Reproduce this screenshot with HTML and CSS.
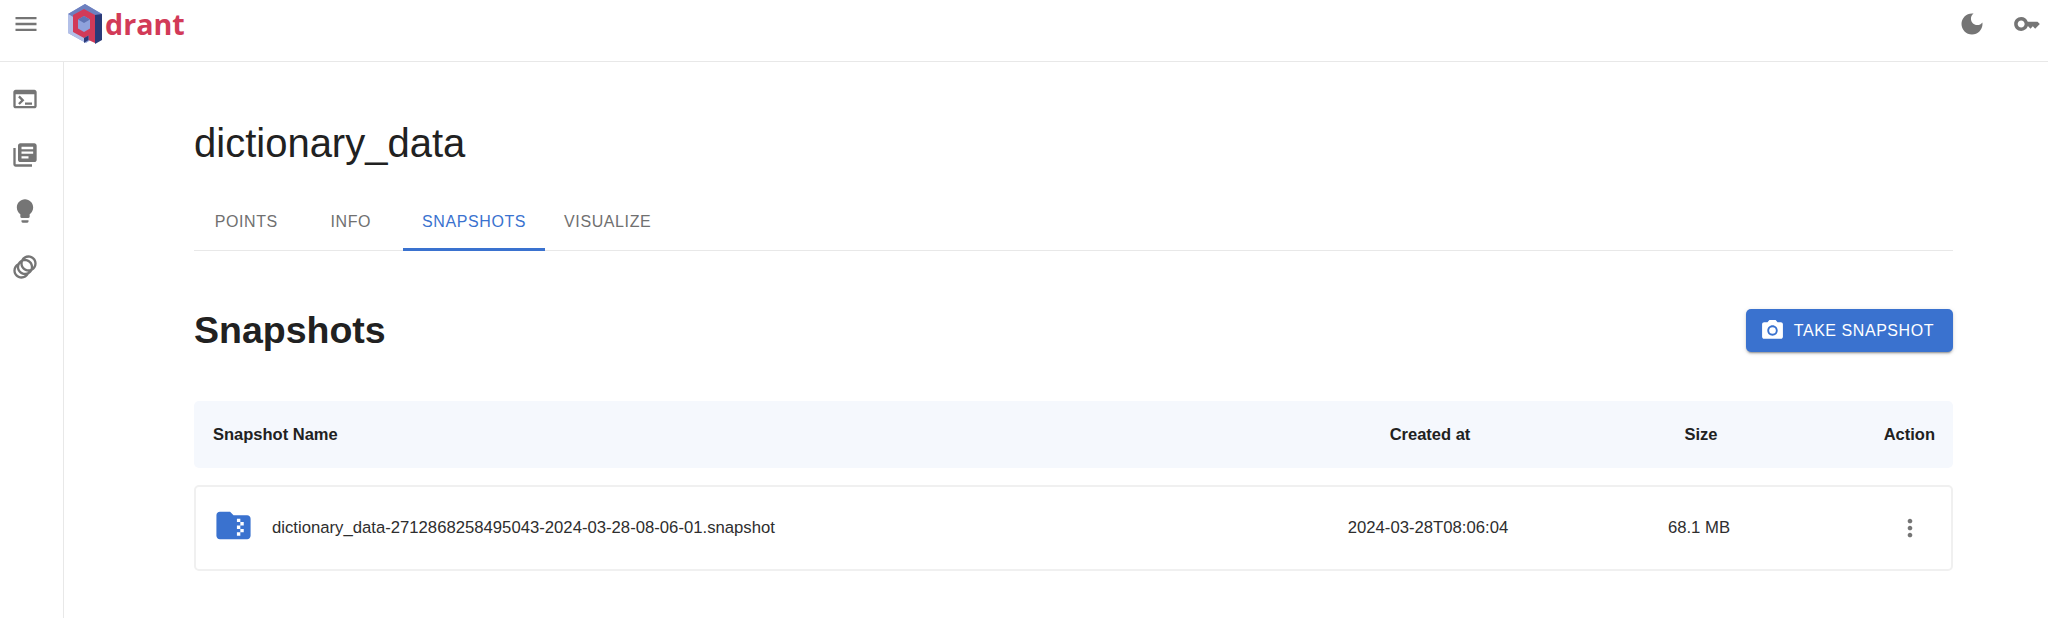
FILE: index.html
```html
<!DOCTYPE html>
<html lang="en">
<head>
    <meta charset="UTF-8">
    <meta name="viewport" content="width=device-width, initial-scale=1.0">
    <title>Qdrant - dictionary_data</title>
    <link rel="stylesheet" href="styles.css">
</head>
<body>
    <header class="topbar">
        <svg class="icon menu-icon" viewBox="0 0 24 24"><path d="M3 18h18v-2H3v2zm0-5h18v-2H3v2zm0-7v2h18V6H3z"/></svg>
        <div class="logo">
            <svg class="logo-mark" viewBox="0 0 36 40">
                <polygon fill="#8fa2dc" points="17,0 34,10 34,28 18,39 0,29 0,10"/>
                <polygon fill="#6d80bf" points="17,0 34,10 27,14 17,8 7,14 0,10"/>
                <polygon fill="#b3c0e8" points="0,10 5,13 5,27 18,34 18,39 0,29"/>
                <polygon fill="#2a3a78" points="27,11 34,10 34,36 27,40"/>
                <polygon fill="#d23a58" points="16,5 27,11 27,39 20.500,36 20.500,31.500 16,34 5,28 5,11"/>
                <polygon fill="#8fa2dc" points="16,12 22,15.500 22,24.500 16,28 10,24.500 10,15.500"/>
                <polygon fill="#5f73b4" points="16,12 22,15.500 16,19 10,15.500"/>
                <polygon fill="#2a3a78" points="16,34 20.500,31.500 20.500,36 16,39"/>
            </svg>
            <span class="logo-text">drant</span>
        </div>
        <div class="topbar-actions">
            <svg class="icon" viewBox="0 0 24 24"><path d="M12 3c-4.970 0-9 4.030-9 9s4.030 9 9 9 9-4.030 9-9c0-.46-.04-.92-.1-1.360-.98 1.370-2.580 2.260-4.400 2.260-2.980 0-5.400-2.420-5.400-5.400 0-1.810.89-3.420 2.260-4.400-.44-.06-.9-.1-1.360-.1z"/></svg>
            <svg class="icon" viewBox="0 0 24 24"><path d="M21 10h-8.350C11.830 7.670 9.610 6 7 6c-3.310 0-6 2.690-6 6s2.690 6 6 6c2.610 0 4.830-1.670 5.650-4H13l2 2 2-2 2 2 4-4.040L21 10zM7 15c-1.650 0-3-1.350-3-3s1.350-3 3-3 3 1.350 3 3-1.350 3-3 3z"/></svg>
        </div>
    </header>

    <div class="layout">
        <nav class="sidebar">
            <svg class="icon" viewBox="0 0 24 24"><path d="M20 4H4c-1.100 0-2 .9-2 2v12c0 1.100.9 2 2 2h16c1.100 0 2-.9 2-2V6c0-1.100-.9-2-2-2zm0 14H4V8h16v10zm-2-1h-6v-2h6v2zM7.500 17l-1.410-1.410L8.670 13l-2.590-2.590L7.500 9l4 4-4 4z"/></svg>
            <svg class="icon" viewBox="0 0 24 24"><path d="M4 6H2v14c0 1.100.9 2 2 2h14v-2H4V6zm16-4H8c-1.100 0-2 .9-2 2v12c0 1.100.9 2 2 2h12c1.100 0 2-.9 2-2V4c0-1.100-.9-2-2-2zm-1 9H9V9h10v2zm-4 4H9v-2h6v2zm4-8H9V5h10v2z"/></svg>
            <svg class="icon" viewBox="0 0 24 24"><path d="M9 21c0 .55.45 1 1 1h4c.55 0 1-.45 1-1v-1H9v1zm3-19C8.140 2 5 5.140 5 9c0 2.380 1.190 4.470 3 5.740V17c0 .55.45 1 1 1h6c.55 0 1-.45 1-1v-2.260c1.810-1.270 3-3.360 3-5.740 0-3.860-3.140-7-7-7z"/></svg>
            <svg class="icon" viewBox="0 0 24 24"><path d="M15 2c-2.710 0-5.050 1.540-6.220 3.780-1.280.67-2.340 1.720-3 3C3.540 9.950 2 12.290 2 15c0 3.870 3.130 7 7 7 2.710 0 5.050-1.540 6.220-3.780 1.280-.67 2.340-1.720 3-3C20.460 14.050 22 11.710 22 9c0-3.870-3.130-7-7-7zM9 20c-2.760 0-5-2.240-5-5 0-1.120.37-2.160 1-3 0 3.870 3.130 7 7 7-.84.63-1.880 1-3 1zm3-3c-2.760 0-5-2.240-5-5 0-1.120.37-2.160 1-3 0 3.860 3.130 6.990 7 6.990-.84.64-1.880 1.010-3 1.010zm4.700-3.300c-.53.19-1.100.3-1.700.3-2.760 0-5-2.240-5-5 0-.6.11-1.170.3-1.700.53-.19 1.100-.3 1.700-.3 2.760 0 5 2.240 5 5 0 .6-.11 1.170-.3 1.700zM19 12c0-3.860-3.130-6.990-7-7 .84-.63 1.870-1 3-1 2.760 0 5 2.240 5 5 0 1.120-.37 2.160-1 3z"/></svg>
        </nav>

        <main class="content">
            <h1 class="page-title">dictionary_data</h1>

            <div class="tabs">
                <div class="tab">POINTS</div>
                <div class="tab">INFO</div>
                <div class="tab active">SNAPSHOTS</div>
                <div class="tab">VISUALIZE</div>
            </div>

            <div class="section-head">
                <h2 class="section-title">Snapshots</h2>
                <button class="primary-btn">
                    <svg viewBox="0 0 24 24"><circle cx="12" cy="12" r="3.200"/><path d="M9 2 7.170 4H4c-1.100 0-2 .9-2 2v12c0 1.100.9 2 2 2h16c1.100 0 2-.9 2-2V6c0-1.100-.9-2-2-2h-3.170L15 2H9zm3 15c-2.760 0-5-2.240-5-5s2.240-5 5-5 5 2.240 5 5-2.240 5-5 5z"/></svg>
                    TAKE SNAPSHOT
                </button>
            </div>

            <div class="snap-grid snap-head">
                <div>Snapshot Name</div>
                <div class="center">Created at</div>
                <div class="center">Size</div>
                <div class="right">Action</div>
            </div>

            <div class="snap-grid snap-row">
                <div class="snap-name">
                    <svg viewBox="0 0 24 24"><path d="M20 6h-8l-2-2H4c-1.100 0-1.990.9-1.990 2L2 18c0 1.100.9 2 2 2h16c1.100 0 2-.9 2-2V8c0-1.100-.9-2-2-2zm-2 6h-2v2h2v2h-2v2h-2v-2h2v-2h-2v-2h2v-2h-2V8h2v2h2v2z"/></svg>
                    <span>dictionary_data-2712868258495043-2024-03-28-08-06-01.snapshot</span>
                </div>
                <div class="center">2024-03-28T08:06:04</div>
                <div class="center">68.1 MB</div>
                <div class="right">
                    <svg class="icon more-icon" viewBox="0 0 24 24"><path d="M12 8c1.100 0 2-.9 2-2s-.9-2-2-2-2 .9-2 2 .9 2 2 2zm0 2c-1.100 0-2 .9-2 2s.9 2 2 2 2-.9 2-2-.9-2-2-2zm0 6c-1.100 0-2 .9-2 2s.9 2 2 2 2-.9 2-2-.9-2-2-2z"/></svg>
                </div>
            </div>
        </main>
    </div>
</body>
</html>
```
FILE: styles.css
```css
* {
    box-sizing: border-box;
}

html,
body {
    height: 100%;
}

body {
    margin: 0;
    overflow: hidden;
    background-color: #fff;
    color: #212121;
    font-family: "Liberation Sans", Arial, sans-serif;
}

.icon {
    width: 28px;
    height: 28px;
    fill: #757575;
    flex-shrink: 0;
}

/* Top bar */
.topbar {
    display: flex;
    align-items: center;
    height: 62px;
    padding: 0 7px 14px 12px;
    border-bottom: 1px solid #e8e8e8;
}

.menu-icon {
    margin-right: 28px;
}

.logo {
    display: flex;
    align-items: center;
}

.logo-mark {
    width: 36px;
    height: 40px;
}

.logo-text {
    margin-left: 1px;
    color: #d23a58;
    font-family: "Open Sans", sans-serif;
    font-size: 28.700px;
    font-weight: 700;
    line-height: 40px;
}

.topbar-actions {
    display: flex;
    align-items: center;
    gap: 27px;
    margin-left: auto;
}

/* Layout */
.layout {
    display: flex;
    height: calc(100% - 62px);
}

.sidebar {
    display: flex;
    flex-direction: column;
    align-items: center;
    gap: 28px;
    width: 64px;
    padding: 23px 13px 0 0;
    border-right: 1px solid #e8e8e8;
}

.content {
    flex: 1;
    padding: 56px 95px 0 130px;
}

.page-title {
    margin: 0;
    font-size: 40px;
    font-weight: 400;
    line-height: 50px;
}

/* Tabs */
.tabs {
    display: flex;
    height: 60px;
    margin-top: 23px;
    border-bottom: 1px solid #e8e8e8;
}

.tab {
    min-width: 104.500px;
    padding: 22px 19px 0;
    color: #707070;
    font-size: 16px;
    letter-spacing: 0.6px;
    text-align: center;
}

.tab.active {
    color: #3a72cf;
    border-bottom: 3px solid #3a72cf;
    margin-bottom: -1px;
}

/* Section heading */
.section-head {
    display: flex;
    justify-content: space-between;
    align-items: center;
    margin-top: 58px;
}

.section-title {
    margin: 0;
    font-size: 37.500px;
    font-weight: 700;
}

.primary-btn {
    display: flex;
    align-items: center;
    gap: 9px;
    height: 43px;
    padding: 0 19px 0 14px;
    border: none;
    border-radius: 5px;
    background-color: #3a72cf;
    box-shadow: 0 3px 1px -2px rgba(0, 0, 0, 0.2), 0 2px 2px 0 rgba(0, 0, 0, 0.14), 0 1px 5px 0 rgba(0, 0, 0, 0.12);
    color: #fff;
    font-family: inherit;
    font-size: 16px;
    letter-spacing: 0.55px;
}

.primary-btn svg {
    width: 25px;
    height: 25px;
    fill: #fff;
}

/* Snapshot table */
.snap-grid {
    display: grid;
    grid-template-columns: 1fr 240px 302px 83px;
    align-items: center;
    padding: 0 18px 0 19px;
}

.snap-head {
    height: 67px;
    margin-top: 49px;
    border-radius: 5px;
    background-color: #f5f8fd;
    font-size: 16.500px;
    font-weight: 700;
}

.snap-row {
    height: 86px;
    margin-top: 17px;
    border: 2px solid #f0f0f0;
    border-radius: 5px;
    color: #2e2e2e;
    font-size: 16.700px;
}

.center {
    text-align: center;
}

.right {
    text-align: right;
}

.snap-name {
    display: flex;
    align-items: center;
    gap: 18px;
    margin-left: -2px;
}

.snap-name svg {
    width: 41px;
    height: 41px;
    margin-top: -5px;
    fill: #3a72cf;
}

.more-icon {
    display: block;
    margin: 0 9px 0 auto;
}
```
